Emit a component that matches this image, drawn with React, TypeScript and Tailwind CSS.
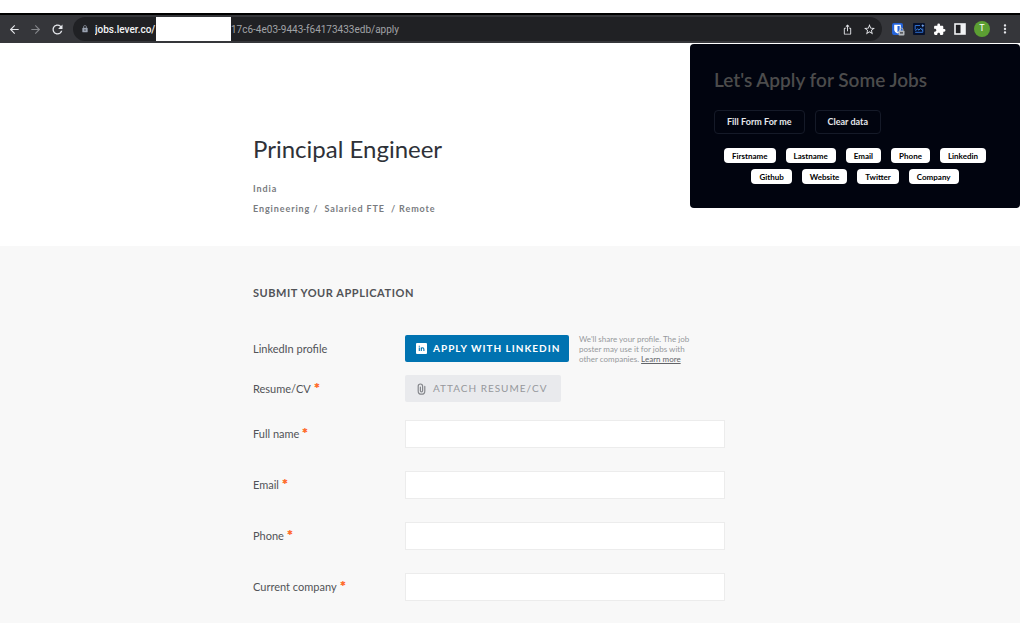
import type React from "react"
import { ArrowLeft, ArrowRight } from "lucide-react"
import { MdExtension, MdIosShare, MdLock, MdMoreVert, MdRefresh, MdStarBorder } from "react-icons/md"

const TEXT_FIELDS = [
  { id: "name", label: "Full name", type: "text" },
  { id: "email", label: "Email", type: "email" },
  { id: "phone", label: "Phone", type: "tel" },
  { id: "company", label: "Current company", type: "text" },
]

const COPY_FIELDS = ["Firstname", "Lastname", "Email", "Phone", "Linkedin", "Github", "Website", "Twitter", "Company"]

const ShieldIcon = () => (
  <svg width="13" height="13" viewBox="0 0 13 13">
    <rect x="0" y="0" width="11" height="12" rx="2" fill="#2463d8" />
    <path d="M2.2 1.8h6.6v4.4c0 2.2-1.6 3.4-3.3 4.3-1.7-.9-3.3-2.1-3.3-4.3z" fill="#fff" />
    <path d="M5.5 3h2.2v3.2c0 1.4-1 2.2-2.2 3z" fill="#2463d8" />
    <rect x="6.5" y="7.5" width="6" height="5" rx="1" fill="#b4b8bd" />
    <path d="M8 7.5V6.6a1.5 1.5 0 0 1 3 0v.9" stroke="#b4b8bd" fill="none" />
    <rect x="8" y="9.3" width="3" height="1.2" fill="#35363a" />
  </svg>
)

const ImageIcon = () => (
  <svg width="12" height="12" viewBox="0 0 12 12">
    <rect width="12" height="12" rx="1" fill="#07112b" />
    <path d="M7 2.5H2.2v4.2M2.2 9.3h7.6V5.5" stroke="#2f6fd0" fill="none" />
    <path d="M2.5 7.8l2-2 1.5 1.4 1.7-2 1.9 2.4" stroke="#3f8cf0" fill="none" />
    <path d="M9.8 1l.5 1.2 1.2.5-1.2.5-.5 1.2-.5-1.2-1.2-.5 1.2-.5z" fill="#7db4ff" />
  </svg>
)

const SidePanelIcon = () => (
  <svg width="12" height="12" viewBox="0 0 12 12">
    <rect x="1" y="1" width="10" height="10" fill="#202124" stroke="#f1f3f4" strokeWidth="1.6" />
    <rect x="6.5" y="1" width="4.5" height="10" fill="#f1f3f4" />
  </svg>
)

const LinkedInIcon = () => (
  <svg width="11" height="11" viewBox="0 0 11 11">
    <rect width="11" height="11" rx="1" fill="#fff" />
    <path d="M3.3 4.5v3.5M3.3 2.8v1M5.3 8V4.5M5.3 6.2c0-2 2.6-2 2.6 0V8" stroke="#0073b1" strokeWidth="1.1" fill="none" />
  </svg>
)

const ClipIcon = () => (
  <svg width="11" height="12" viewBox="0 0 11 12" fill="none" stroke="#85878c" strokeWidth="1.2" strokeLinecap="round">
    <path d="M4.4 4v3.8a1.1 1.1 0 0 0 2.2 0V3.2a2.2 2.2 0 0 0-4.4 0v4.7a3.3 3.3 0 0 0 6.6 0V3.4" />
  </svg>
)

const BrowserBar = () => (
  <header className="flex h-[30px] items-center border-t-2 border-black bg-[#35363a] pl-2 text-gray-200">
    <nav className="flex items-center gap-2" aria-label="History">
      <button type="button" aria-label="Back">
        <ArrowLeft size={13} />
      </button>
      <button type="button" aria-label="Forward" className="text-[#85878b]">
        <ArrowRight size={13} />
      </button>
      <button type="button" aria-label="Reload">
        <MdRefresh size={15} />
      </button>
    </nav>

    <div className="ml-2 flex h-6 min-w-0 flex-1 items-center rounded-full bg-[#202124] pr-1.5 pl-2 font-[Roboto,sans-serif] text-[10px]">
      <MdLock size={8} className="mr-1.5 shrink-0 text-gray-400" />
      <span className="w-[61px] shrink-0 overflow-hidden font-medium whitespace-nowrap text-gray-100">jobs.lever.co/</span>
      <span className="h-6 w-[75px] shrink-0 bg-white" />
      <span className="min-w-0 flex-1 truncate text-[#a0a3a7]">17c6-4e03-9443-f64173433edb/apply</span>
      <button type="button" aria-label="Share">
        <MdIosShare size={11} />
      </button>
      <button type="button" aria-label="Bookmark" className="ml-2.5">
        <MdStarBorder size={13} />
      </button>
    </div>

    <div className="flex items-center gap-2 pr-2 pl-2.5">
      <ShieldIcon />
      <ImageIcon />
      <MdExtension size={13} className="text-white" />
      <SidePanelIcon />
      <span className="flex size-4 items-center justify-center rounded-full bg-[#5c9f33] font-[Roboto,sans-serif] text-[9px] text-white">
        T
      </span>
      <MdMoreVert size={14} />
    </div>
  </header>
)

const ExtensionPopup = () => (
  <aside className="absolute top-px right-0 w-[330px] rounded bg-[#01040f] p-6 text-white">
    <h2 className="text-[19px] leading-6 font-semibold text-[#4c4c4c]">Let's Apply for Some Jobs</h2>
    <div className="mt-[18px] flex gap-2.5">
      <button type="button" className="h-6 rounded-sm border border-[#151a28] px-3 text-[9px] font-bold text-gray-200">
        Fill Form For me
      </button>
      <button type="button" className="h-6 rounded-sm border border-[#151a28] px-3 text-[9px] font-bold text-gray-200">
        Clear data
      </button>
    </div>
    <div className="mt-3.5 flex flex-wrap justify-center gap-x-2.5 gap-y-1.5">
      {COPY_FIELDS.map((field) => (
        <button key={field} type="button" className="h-[15px] rounded bg-white px-2 text-[8px] leading-none font-bold text-black">
          {field}
        </button>
      ))}
    </div>
  </aside>
)

interface FormRowProps {
  id: string
  label: string
  required?: boolean
  children: React.ReactNode
}

const FormRow: React.FC<FormRowProps> = ({ id, label, required = false, children }) => (
  <div className="grid grid-cols-[152px_1fr] items-center">
    <label htmlFor={id} className="flex items-start gap-[3px] text-[11px] leading-4 text-[#515357]">
      {label}
      {required && <span className="text-[7px] leading-[8px] text-[#ff6b2c]">✱</span>}
    </label>
    {children}
  </div>
)

const App: React.FC = () => (
  <div className="bg-white pt-[13px] font-[Lato,sans-serif]">
    <BrowserBar />

    <main className="relative">
      <section className="px-6 pt-[90px] pb-[29px]">
        <div className="mx-auto max-w-[514px]">
          <h1 className="text-[24px] leading-8 text-[#2e3138]">Principal Engineer</h1>
          <p className="mt-4 text-[9px] leading-4 font-bold tracking-widest text-[#797b80]">India</p>
          <p className="mt-1 flex gap-1.5 text-[9px] leading-4 font-bold tracking-widest text-[#797b80]">
            <span>Engineering /</span>
            <span>Salaried FTE</span>
            <span>/ Remote</span>
          </p>
        </div>
      </section>

      <section className="bg-[#f8f8f8] px-6 pt-[39px] pb-[22px]">
        <form className="mx-auto max-w-[514px]">
          <h2 className="text-[11px] leading-4 font-bold tracking-wider text-[#515357]">SUBMIT YOUR APPLICATION</h2>

          <div className="mt-[34px]">
            <FormRow id="linkedin" label="LinkedIn profile">
              <div className="flex h-[27px] items-center">
                <button
                  id="linkedin"
                  type="button"
                  className="flex h-full w-[164px] shrink-0 items-center gap-1.5 rounded-xs bg-[#0073b1] pl-[11px] text-[10px] font-bold tracking-widest whitespace-nowrap text-white"
                >
                  <LinkedInIcon />
                  APPLY WITH LINKEDIN
                </button>
                <div className="ml-2.5 w-[120px] text-[8px] leading-[10px] text-[#96989c]">
                  <p>We'll share your profile. The job poster may use it for jobs with</p>
                  <p className="flex gap-0.5">
                    <span>other companies.</span>
                    <a href="#learn" className="text-[#626468] underline">
                      Learn more
                    </a>
                  </p>
                </div>
              </div>
            </FormRow>
          </div>

          <div className="mt-[13px]">
            <FormRow id="resume" label="Resume/CV" required>
              <button
                id="resume"
                type="button"
                className="flex h-[27px] w-[156px] items-center gap-1.5 rounded-xs bg-[#e9eaed] pl-[11px] text-[10px] tracking-widest whitespace-nowrap text-[#96989c]"
              >
                <ClipIcon />
                ATTACH RESUME/CV
              </button>
            </FormRow>
          </div>

          <div className="mt-[18px] flex flex-col gap-[23px]">
            {TEXT_FIELDS.map(({ id, label, type }) => (
              <FormRow key={id} id={id} label={label} required>
                <input
                  id={id}
                  type={type}
                  className="h-7 w-full max-w-[320px] border border-[#ececec] bg-white px-2 text-[11px] outline-none"
                />
              </FormRow>
            ))}
          </div>
        </form>
      </section>

      <ExtensionPopup />
    </main>
  </div>
)

export default App
